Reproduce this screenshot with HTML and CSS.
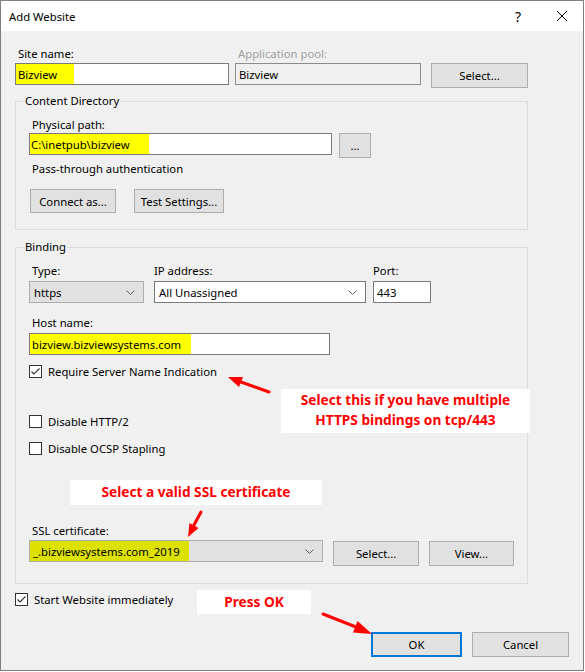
FILE: index.html
```html
<!DOCTYPE html>
<html>
<head>
<meta charset="utf-8">
<title>Add Website</title>
<link rel="stylesheet" href="styles.css">
</head>
<body>
<div class="window">
  <div class="titlebar">
    <span class="title">Add Website</span>
    <span class="help">?</span>
    <svg class="close" width="12" height="12" viewBox="0 0 12 12"><path d="M1 1 L11 11 M11 1 L1 11" stroke="#000" stroke-width="1" fill="none"/></svg>
  </div>
  <div class="content">
    <div class="top-grid">
      <div class="label lab-site">Site name:</div>
      <div class="label lab-pool disabled">Application pool:</div>
      <div></div>
      <div class="textbox"><span class="hl hl-site">Bizview</span></div>
      <div class="textbox readonly"><span class="val">Bizview</span></div>
      <div class="btn btn-pool">Select...</div>
    </div>

    <div class="group group-content">
      <span class="group-title">Content Directory</span>
      <div class="label indent">Physical path:</div>
      <div class="row path-row">
        <div class="textbox tb-path"><span class="hl hl-path">C:\inetpub\bizview</span></div>
        <div class="btn btn-dots">...</div>
      </div>
      <div class="label indent pass">Pass-through authentication</div>
      <div class="row btn-row">
        <div class="btn btn-connect">Connect as...</div>
        <div class="btn btn-test">Test Settings...</div>
      </div>
    </div>

    <div class="group group-binding">
      <span class="group-title">Binding</span>
      <div class="bind-grid">
        <div class="label indent">Type:</div>
        <div class="label">IP address:</div>
        <div class="label">Port:</div>
        <div class="combo combo-gray combo-type"><span class="val">https</span>
          <svg class="chev" width="9" height="5" viewBox="0 0 9 5"><path d="M0.5 0.5 L4.5 4.5 L8.5 0.5" stroke="#606060" fill="none"/></svg></div>
        <div class="combo combo-white combo-ip"><span class="val">All Unassigned</span>
          <svg class="chev" width="9" height="5" viewBox="0 0 9 5"><path d="M0.5 0.5 L4.5 4.5 L8.5 0.5" stroke="#606060" fill="none"/></svg></div>
        <div class="textbox"><span class="val">443</span></div>
      </div>
      <div class="label indent host-label">Host name:</div>
      <div class="textbox tb-host"><span class="hl hl-host">bizview.bizviewsystems.com</span></div>

      <div class="check-row sni">
        <span class="box"><svg width="11" height="11" viewBox="0 0 11 11"><path d="M1.5 5.5 L4 8 L9.5 2.5" stroke="#333" stroke-width="1.1" fill="none"/></svg></span>
        <span>Require Server Name Indication</span>
      </div>
      <div class="check-row http2">
        <span class="box"></span>
        <span>Disable HTTP/2</span>
      </div>
      <div class="check-row ocsp">
        <span class="box"></span>
        <span>Disable OCSP Stapling</span>
      </div>

      <div class="label indent ssl-label">SSL certificate:</div>
      <div class="row ssl-row">
        <div class="combo combo-gray combo-ssl"><span class="hl hl-ssl">_.bizviewsystems.com_2019</span>
          <svg class="chev" width="9" height="5" viewBox="0 0 9 5"><path d="M0.5 0.5 L4.5 4.5 L8.5 0.5" stroke="#606060" fill="none"/></svg></div>
        <div class="btn btn-ssl">Select...</div>
        <div class="btn btn-ssl">View...</div>
      </div>
    </div>

    <div class="check-row start">
      <span class="box"><svg width="11" height="11" viewBox="0 0 11 11"><path d="M1.5 5.5 L4 8 L9.5 2.5" stroke="#333" stroke-width="1.1" fill="none"/></svg></span>
      <span>Start Website immediately</span>
    </div>

    <div class="footer">
      <div class="btn btn-ok">OK</div>
      <div class="btn btn-cancel">Cancel</div>
    </div>
  </div>

  <div class="note note-sni">Select this if you have multiple<br>HTTPS bindings on tcp/443</div>
  <div class="note note-ssl">Select a valid SSL certificate</div>
  <div class="note note-ok">Press OK</div>

  <svg class="arrows" width="584" height="671" viewBox="0 0 584 671">
    <g stroke="#ff0000" stroke-width="3" fill="#ff0000" stroke-linecap="round">
      <line x1="269" y1="392" x2="241" y2="382"/>
      <polygon stroke="none" points="228,377 243,377 239,387"/>
      <line x1="201" y1="512" x2="194" y2="525"/>
      <polygon stroke="none" points="188,537 189.5,523 198.5,528"/>
      <line x1="323" y1="614" x2="356" y2="627"/>
      <polygon stroke="none" points="372,634 353,632.5 357.5,621"/>
    </g>
  </svg>
</div>
</body>
</html>
```
FILE: styles.css
```css
* { box-sizing: border-box; }
html, body { margin: 0; padding: 0; background: #ffffff; }
body {
  font-family: "Noto Sans", "Open Sans", sans-serif;
  font-size: 11.3px;
  line-height: 15px;
  color: #000;
}
.window {
  position: relative;
  width: 584px;
  height: 671px;
  border: 1px solid #7f7f7f;
  background: #f0f0f0;
}
.titlebar {
  height: 30px;
  background: #ffffff;
  display: flex;
  align-items: center;
  padding-left: 8px;
}
.title { flex: 1; font-size: 11.3px; }
.help { font-size: 14px; width: 20px; margin-right: 28px; text-align: center; }
.close { margin-right: 15px; }
.content { padding: 15px 14px 0 14px; }

.label { height: 15px; white-space: nowrap; }
.lab-site, .lab-pool { padding-left: 3px; }
.disabled { color: #a0a0a0; }
.indent { padding-left: 3px; }

.top-grid {
  display: grid;
  grid-template-columns: 214px 186px 97px;
  column-gap: 6px;
  row-gap: 2px;
  align-items: start;
}
.top-grid > :nth-child(3n) { margin-left: 4px; }

.textbox {
  height: 22px;
  background: #fff;
  border: 1px solid #7a7a7a;
  display: flex;
  align-items: center;
  padding-left: 2px;
  overflow: hidden;
  white-space: nowrap;
}
.textbox.readonly { background: #f0f0f0; border-color: #8c8c8c; }
.hl {
  background: #ffff00;
  height: 20px;
  display: flex;
  align-items: center;
  margin-left: -2px;
  padding-left: 2px;
}
.hl-site { width: 58px; }
.hl-path { width: 120px; }
.hl-host { width: 161px; }
.hl-ssl { width: 159px; background: #dde100; padding-left: 3px; }
.val { padding-left: 1px; }

.btn {
  height: 25px;
  background: #e1e1e1;
  border: 1px solid #adadad;
  display: flex;
  align-items: center;
  justify-content: center;
  white-space: nowrap;
}
.btn-pool { width: 97px; }

.group {
  position: relative;
  width: 513px;
  border: 1px solid #dcdcdc;
  padding: 15px 13px 16px 13px;
}
.group-title {
  position: absolute;
  top: -9px;
  left: 7px;
  padding: 0 2px;
  background: #f0f0f0;
  line-height: 15px;
}
.group-content { margin-top: 13px; }
.group-binding { margin-top: 17px; padding-bottom: 17px; }

.row { display: flex; align-items: flex-start; }
.path-row { margin-top: 1px; gap: 7px; }
.tb-path { width: 303px; padding-left: 1px; }
.btn-dots { width: 32px; }
.pass { margin-top: 3px; }
.btn-row { margin-top: 13px; gap: 18px; padding-left: 1px; }
.btn-row .btn { height: 24px; }
.btn-connect { width: 86px; }
.btn-test { width: 90px; }

.bind-grid {
  display: grid;
  grid-template-columns: 125px 219px 58px;
  row-gap: 3px;
}
.combo-type { width: 115px; }
.combo-ip { width: 212px; }
.combo {
  height: 22px;
  display: flex;
  align-items: center;
  justify-content: space-between;
  padding: 0 8px 0 3px;
  white-space: nowrap;
}
.combo-gray { background: #e1e1e1; border: 1px solid #adadad; }
.combo-white { background: #fff; border: 1px solid #7a7a7a; }
.host-label { margin-top: 12px; }
.tb-host { margin-top: 3px; width: 301px; }

.check-row {
  display: flex;
  align-items: center;
  height: 15px;
  white-space: nowrap;
}
.box {
  width: 13px;
  height: 13px;
  border: 1px solid #333;
  background: #fff;
  margin-right: 6px;
  display: flex;
  align-items: center;
  justify-content: center;
}
.sni { margin-top: 9px; }
.http2 { margin-top: 35px; }
.ocsp { margin-top: 12px; }
.ssl-label { margin-top: 67px; }
.ssl-row { margin-top: 2px; }
.combo-ssl { width: 297px; padding-left: 0; }
.combo-ssl .hl { margin-left: 0; }
.btn-ssl { width: 86px; margin-top: 1px; margin-left: 10px; }
.btn-ssl + .btn-ssl { margin-left: 10px; }

.start { margin-top: 8px; }

.footer {
  display: flex;
  justify-content: flex-end;
  gap: 10px;
  margin-top: 25px;
  width: 554px;
}
.btn-ok { width: 91px; border: 2px solid #0078d7; }
.btn-cancel { width: 97px; }

.note {
  position: absolute;
  background: #ffffff;
  color: #ff0000;
  font-weight: bold;
  font-size: 13.7px;
  text-align: center;
  white-space: nowrap;
}
.note-sni {
  left: 280px; top: 388px; width: 249px; height: 44px;
  line-height: 20px; padding-top: 1px;
}
.note-ssl {
  left: 69px; top: 479px; width: 252px; height: 25px;
  line-height: 24px;
}
.note-ok {
  left: 196px; top: 589px; width: 114px; height: 24px;
  line-height: 23px;
}
.arrows { position: absolute; left: -1px; top: -1px; pointer-events: none; }
```
